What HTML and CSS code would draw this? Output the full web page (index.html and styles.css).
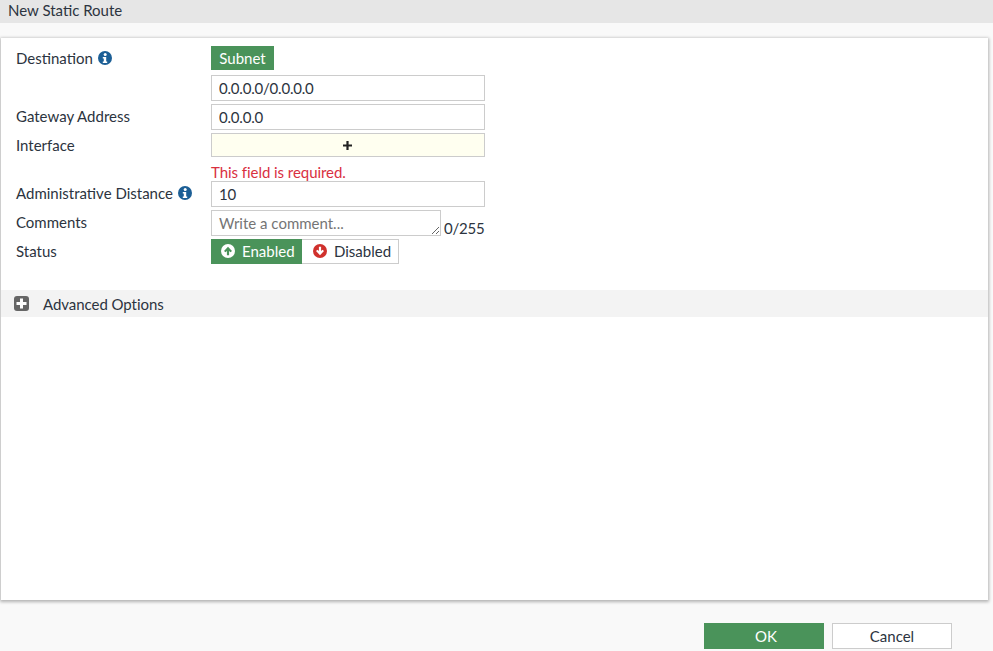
FILE: index.html
```html
<!DOCTYPE html>
<html lang="en">
<head>
<meta charset="utf-8">
<title>New Static Route</title>
<link rel="stylesheet" href="styles.css">
</head>
<body>
<header class="title">New Static Route</header>
<main class="panel">
  <form class="form">
    <div class="row row-dest">
      <div class="label">Destination
        <svg class="info" viewBox="0 0 14 14"><circle cx="7" cy="7" r="7" fill="#1c5f96"/><circle cx="7.2" cy="3.4" r="1.5" fill="#fff"/><path d="M4.8 6h3.4v4.6h1v1.5H4.8v-1.5h1V7.5h-1z" fill="#fff"/></svg>
      </div>
      <div class="control"><span class="tab">Subnet</span></div>
    </div>
    <div class="row row-sub">
      <div class="label"></div>
      <div class="control"><input class="field" type="text" value="0.0.0.0/0.0.0.0"></div>
    </div>
    <div class="row">
      <div class="label">Gateway Address</div>
      <div class="control"><input class="field" type="text" value="0.0.0.0"></div>
    </div>
    <div class="row row-iface">
      <div class="label">Interface</div>
      <div class="control">
        <div class="picker"><svg class="plus" viewBox="0 0 9 9"><path d="M3.4 0h2.2v3.4H9v2.2H5.6V9H3.4V5.6H0V3.4h3.4z" fill="#222"/></svg></div>
        <div class="error">This field is required.</div>
      </div>
    </div>
    <div class="row">
      <div class="label">Administrative Distance
        <svg class="info" viewBox="0 0 14 14"><circle cx="7" cy="7" r="7" fill="#1c5f96"/><circle cx="7.2" cy="3.4" r="1.5" fill="#fff"/><path d="M4.8 6h3.4v4.6h1v1.5H4.8v-1.5h1V7.5h-1z" fill="#fff"/></svg>
      </div>
      <div class="control"><input class="field" type="text" value="10"></div>
    </div>
    <div class="row">
      <div class="label">Comments</div>
      <div class="control comment-line">
        <textarea class="comment" placeholder="Write a comment..."></textarea>
        <span class="count">0/255</span>
      </div>
    </div>
    <div class="row row-status">
      <div class="label">Status</div>
      <div class="control toggle">
        <span class="toggle-on">
          <svg class="state" viewBox="0 0 14 14"><circle cx="7" cy="7" r="7" fill="#fff"/><path d="M7 2.8 11 6.900 9.500 8.300 8.100 6.900V11.200H5.900V6.900L4.500 8.300 3 6.900z" fill="#4a935a"/></svg>
          Enabled
        </span>
        <span class="toggle-off">
          <svg class="state" viewBox="0 0 14 14"><circle cx="7" cy="7" r="7" fill="#d0312d"/><path d="M7 11.200 3 7.100 4.500 5.700 5.900 7.100V2.800H8.100V7.100L9.500 5.700 11 7.100z" fill="#fff"/></svg>
          Disabled
        </span>
      </div>
    </div>
    <div class="advanced">
      <svg class="expand" viewBox="0 0 15 15"><rect width="15" height="15" rx="3" fill="#666"/><path d="M6 2.500h3V6h3.500v3H9v3.500H6V9H2.500V6H6z" fill="#fff"/></svg>
      <span>Advanced Options</span>
    </div>
  </form>
</main>
<footer class="actions">
  <button class="btn btn-ok" type="button">OK</button>
  <button class="btn btn-cancel" type="button">Cancel</button>
</footer>
</body>
</html>
```
FILE: styles.css
```css
* { box-sizing: border-box; }
html, body { height: 100%; }
body {
  margin: 0;
  height: 651px;
  overflow: hidden;
  display: flex;
  flex-direction: column;
  background: #f9f9f9;
  color: #2c3440;
  font-family: Lato, "Liberation Sans", sans-serif;
  font-size: 15px;
  line-height: 20px;
}
.title {
  height: 23px;
  flex: none;
  padding-left: 8px;
  background: #e6e6e6;
  font-size: 15px;
  line-height: 21px;
}
.panel {
  flex: none;
  height: 562px;
  margin: 15px 5px 0 1px;
  background: #fff;
  box-shadow: 0 1px 3px 1px rgba(0, 0, 0, 0.28);
}
.form { display: flex; flex-direction: column; padding-top: 8px; }
.row { display: flex; margin-bottom: 3px; }
.row-dest { margin-bottom: 5px; }
.row-status { margin-bottom: 26px; }
.label {
  flex: none;
  width: 210px;
  padding-left: 15px;
  padding-top: 2px;
  white-space: nowrap;
}
.info { width: 14px; height: 14px; margin-left: 1px; vertical-align: -1px; }
.control { width: 274px; }
.tab {
  display: block;
  width: 63px;
  height: 24px;
  background: #4a935a;
  color: #fff;
  text-align: center;
  line-height: 24px;
}
.field {
  display: block;
  width: 100%;
  height: 26px;
  padding: 0 7px;
  border: 1px solid #ccc;
  background: #fff;
  color: #2c3440;
  font: 15px/24px Lato, "Liberation Sans", sans-serif;
  letter-spacing: -0.2px;
  outline: none;
}
.picker {
  display: flex;
  align-items: center;
  justify-content: center;
  height: 24px;
  padding-right: 2px;
  border: 1px solid #ccc;
  background: #fffff0;
}
.plus { width: 9px; height: 9px; }
.error {
  height: 21px;
  padding-top: 6px;
  color: #d9303f;
  line-height: 19px;
  letter-spacing: -0.05px;
}
.comment-line { display: flex; align-items: flex-end; gap: 3px; }
.comment {
  display: block;
  flex: none;
  width: 230px;
  height: 26px;
  padding: 2px 7px;
  border: 1px solid #ccc;
  color: #2c3440;
  font: 15px/20px Lato, "Liberation Sans", sans-serif;
  outline: none;
  resize: both;
  overflow: hidden;
}
.comment::placeholder { color: #757575; opacity: 1; }
.count { line-height: 16px; white-space: nowrap; letter-spacing: -0.2px; }
.toggle { display: flex; height: 25px; }
.toggle-on, .toggle-off {
  display: flex;
  align-items: center;
  gap: 7px;
  height: 25px;
  padding-bottom: 1px;
}
.toggle-on { padding-left: 10px; padding-right: 7px; background: #4a935a; color: #fff; width: 91px; }
.toggle-off { padding-left: 11px; padding-right: 7px; border: 1px solid #ccc; border-left: 0; width: 97px; }
.state { width: 14px; height: 14px; flex: none; }
.advanced {
  display: flex;
  align-items: center;
  height: 27px;
  padding-left: 13px;
  gap: 14px;
  background: #f3f3f3;
  letter-spacing: -0.05px;
}
.expand { width: 15px; height: 15px; flex: none; }
.actions {
  display: flex;
  justify-content: flex-end;
  gap: 8px;
  padding: 23px 41px 0 0;
}
.btn {
  width: 120px;
  height: 26px;
  padding: 0;
  border: 1px solid #ccc;
  font: 15px/24px Lato, "Liberation Sans", sans-serif;
}
.btn-ok { padding-left: 4px; background: #4a935a; border-color: #4a935a; color: #fff; }
.btn-cancel { background: #fff; color: #2c3440; }
```
